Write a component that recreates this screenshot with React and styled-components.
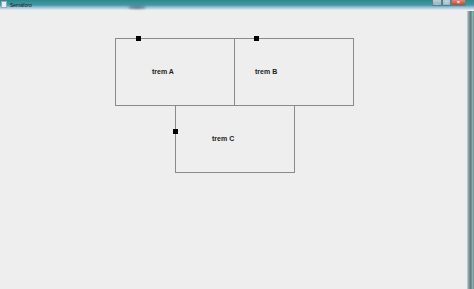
import React from 'react';
import styled, { createGlobalStyle } from 'styled-components';

const GlobalStyle = createGlobalStyle`
  html, body {
    margin: 0;
    padding: 0;
    background: #eeeeee;
    overflow: hidden;
  }
  body {
    font-family: "Liberation Sans", Arial, sans-serif;
  }
`;

const Window = styled.div`
  width: 474px;
  height: 289px;
  display: flex;
  flex-direction: column;
  background: #eeeeee;
`;

const TitleBar = styled.div`
  height: 11px;
  flex: none;
  display: flex;
  align-items: flex-start;
  justify-content: space-between;
  background: linear-gradient(
    to bottom,
    #2b8a8f 0%,
    #3f9aa0 45%,
    #8fbfd6 65%,
    #c9dcec 82%,
    #f4f7fa 100%
  );
  position: relative;
`;

const Glow = styled.div`
  position: absolute;
  left: 128px;
  top: 6px;
  width: 18px;
  height: 3px;
  border-radius: 50%;
  background: rgba(40, 60, 80, 0.55);
  filter: blur(1px);
`;

const TitleLeft = styled.div`
  display: flex;
  align-items: center;
  gap: 3px;
  padding: 1px 0 0 1px;
`;

const AppIcon = styled.div`
  width: 4px;
  height: 5px;
  background: #e8eef2;
  border: 1px solid #9ab;
`;

const Title = styled.span`
  font-size: 5px;
  line-height: 6px;
  color: #111;
`;

const Controls = styled.div`
  display: flex;
  margin-right: 8px;
  height: 6px;
`;

const CtrlButton = styled.div`
  width: ${(p) => p.$w}px;
  height: 6px;
  background: ${(p) => (p.$close ? 'linear-gradient(#e08a7a, #c8432e)' : 'linear-gradient(#b7d0d8, #8fb2bd)')};
  border: 1px solid #5d7f88;
  border-top: none;
  box-sizing: border-box;
  display: flex;
  align-items: center;
  justify-content: center;
  color: #fff;
  font-size: 5px;
  line-height: 5px;
  font-weight: bold;
  &:first-child {
    border-bottom-left-radius: 2px;
  }
  &:last-child {
    border-bottom-right-radius: 2px;
  }
`;

const Body = styled.div`
  flex: 1;
  display: flex;
`;

const Canvas = styled.div`
  flex: 1;
  position: relative;
  background: #eeeeee;
`;

const RightFrame = styled.div`
  width: 7px;
  flex: none;
  background: linear-gradient(
    to right,
    #c9d6d8 0%,
    #7f9296 30%,
    #5f7a80 55%,
    #8fb5b0 80%,
    #6b8a8c 100%
  );
`;

const Track = styled.div`
  position: absolute;
  left: ${(p) => p.$x}px;
  top: ${(p) => p.$y}px;
  width: 118px;
  height: 66px;
  border: 1px solid #8a8a8a;
  box-sizing: content-box;
`;

const TrackLabel = styled.span`
  position: absolute;
  left: ${(p) => p.$lx}px;
  top: 29px;
  font-size: 7px;
  line-height: 8px;
  font-weight: bold;
  color: #222;
  white-space: nowrap;
`;

const Train = styled.div`
  position: absolute;
  left: ${(p) => p.$x}px;
  top: ${(p) => p.$y}px;
  width: 5px;
  height: 5px;
  background: #000;
`;

const tracks = [
  { id: 'A', x: 115, y: 27, lx: 36, train: { x: 20, y: -3 } },
  { id: 'B', x: 234, y: 27, lx: 20, train: { x: 19, y: -3 } },
  { id: 'C', x: 175, y: 94, lx: 36, train: { x: -3, y: 23 } },
];

function App() {
  return (
    <>
      <GlobalStyle />
      <Window>
        <TitleBar>
          <Glow />
          <TitleLeft>
            <AppIcon />
            <Title>Semáforo</Title>
          </TitleLeft>
          <Controls>
            <CtrlButton $w={10}>_</CtrlButton>
            <CtrlButton $w={9}>□</CtrlButton>
            <CtrlButton $w={15} $close>×</CtrlButton>
          </Controls>
        </TitleBar>
        <Body>
          <Canvas>
            {tracks.map((t) => (
              <Track key={t.id} $x={t.x} $y={t.y}>
                <TrackLabel $lx={t.lx}>trem {t.id}</TrackLabel>
                <Train $x={t.train.x} $y={t.train.y} />
              </Track>
            ))}
          </Canvas>
          <RightFrame />
        </Body>
      </Window>
    </>
  );
}

export default App;
